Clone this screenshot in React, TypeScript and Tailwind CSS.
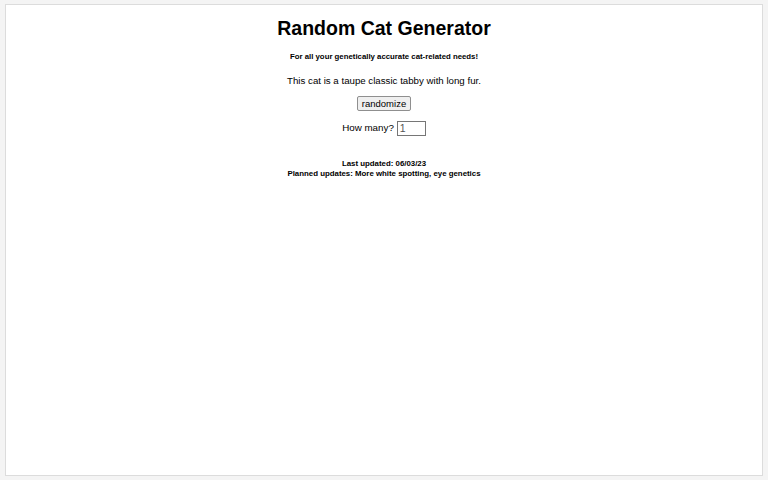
export default function App() {
  return (
    <div className="h-[480px] w-[768px] bg-[#f4f4f4] px-[5px] pt-[4px] pb-[4px] font-['Liberation_Sans',Arial,sans-serif] text-black">
      <div className="h-full border border-[#dcdcdc] bg-white text-center">
        <h1 className="mt-[12px] text-[19.5px] leading-[23px] font-bold">Random Cat Generator</h1>
        <p className="mt-[12px] text-[7.8px] leading-[10px] font-bold">
          For all your genetically accurate cat-related needs!
        </p>
        <p className="mt-[13px] text-[9.7px] leading-[12px]">
          This cat is a taupe classic tabby with long fur.
        </p>
        <div className="mt-[9px] flex justify-center">
          <button className="h-[15px] rounded-[2px] border border-[#8f8f8f] bg-[#efefef] px-[4px] text-[9.5px] leading-[13px]">
            randomize
          </button>
        </div>
        <div className="mt-[10px] flex items-center justify-center gap-[3px] text-[9.8px]">
          <span>How many?</span>
          <input
            type="text"
            defaultValue="1"
            className="h-[15px] w-[29px] border border-[#767676] px-[2px] text-[10.5px] text-[#555]"
          />
        </div>
        <div className="mt-[23px] text-[7.85px] leading-[10px] font-bold">
          <p>Last updated: 06/03/23</p>
          <p>Planned updates: More white spotting, eye genetics</p>
        </div>
      </div>
    </div>
  );
}
